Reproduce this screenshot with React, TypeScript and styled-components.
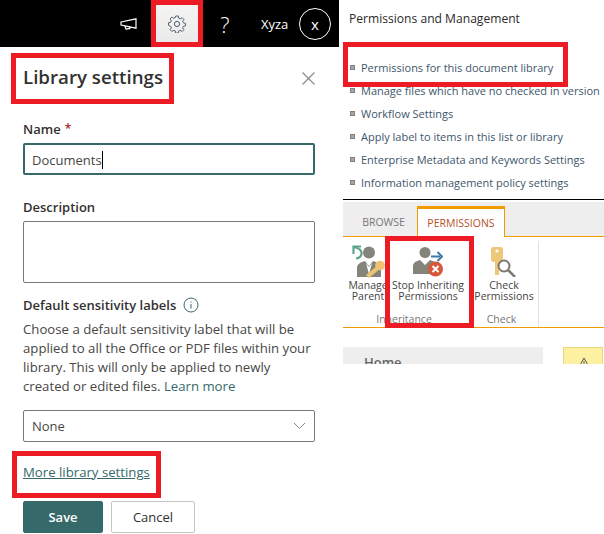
import React from "react";
import styled, { createGlobalStyle } from "styled-components";

const RED = "#ed1c24";
const TEAL = "#36696a";
const TEXT = "#323130";

const Global = createGlobalStyle`
  html, body { margin: 0; padding: 0; background: #fff; }
  body { font-family: "Open Sans", "Liberation Sans", sans-serif; }
  * { box-sizing: border-box; }
`;

const Page = styled.div`
  width: 604px;
  height: 534px;
  display: grid;
  grid-template-columns: 343px 261px;
  overflow: hidden;
`;

const Left = styled.div`
  display: flex;
  flex-direction: column;
`;

const TopBar = styled.div`
  height: 47px;
  width: 339px;
  background: #000;
  display: flex;
  align-items: center;
  color: #fff;
  padding-left: 120px;
`;

const BarIcon = styled.div`
  width: 31px;
  display: flex;
`;

const GearButton = styled.div`
  width: 52px;
  height: 47px;
  border: 5px solid ${RED};
  background: linear-gradient(#f5f4f3, #eaeaea);
  display: flex;
  align-items: center;
  justify-content: center;
`;

const Help = styled.div`
  width: 44px;
  text-align: center;
  font-size: 22px;
  font-weight: 300;
`;

const UserName = styled.div`
  font-size: 13px;
  margin-left: 14px;
  width: 38px;
`;

const Avatar = styled.div`
  width: 32px;
  height: 32px;
  border: 1px solid #fff;
  border-radius: 50%;
  display: flex;
  align-items: center;
  justify-content: center;
  font-size: 15px;
`;

const Panel = styled.div`
  padding: 6px 28px 0 23px;
  display: flex;
  flex-direction: column;
`;

const TitleRow = styled.div`
  display: flex;
  align-items: center;
  justify-content: space-between;
  margin-left: -12px;
`;

const Title = styled.h1`
  margin: 0;
  height: 51px;
  width: 163px;
  border: 5px solid ${RED};
  padding-left: 7px;
  font-size: 18.7px;
  line-height: 38px;
  font-weight: 600;
  color: ${TEXT};
  white-space: nowrap;
`;

const Close = styled.div`
  display: flex;
`;

const Label = styled.div<{ $top: number }>`
  margin-top: ${(p) => p.$top}px;
  font-size: 13px;
  line-height: 20px;
  font-weight: 600;
  color: ${TEXT};
  display: flex;
  align-items: center;
  gap: 7px;
`;

const Star = styled.span`
  color: #a4262c;
  margin-left: -3px;
  font-size: 12px;
`;

const NameInput = styled.div`
  margin-top: 4px;
  height: 32px;
  border: 2px solid ${TEAL};
  border-radius: 2px;
  padding: 1px 0 0 7px;
  font-size: 13px;
  line-height: 28px;
  color: #484644;
  display: flex;
  align-items: center;
`;

const Caret = styled.span`
  width: 1px;
  height: 18px;
  background: #000;
`;

const TextBox = styled.div`
  margin-top: 4px;
  height: 62px;
  border: 1px solid #7a7876;
  border-radius: 2px;
`;

const Blurb = styled.p`
  margin: 5px 0 0;
  font-size: 13.2px;
  line-height: 19px;
  color: #484644;
  white-space: nowrap;
`;

const LearnMore = styled.span`
  color: ${TEAL};
`;

const SelectBox = styled.div`
  margin-top: 14px;
  height: 32px;
  border: 1px solid #7a7876;
  border-radius: 2px;
  padding: 0 8px;
  display: flex;
  align-items: center;
  justify-content: space-between;
  font-size: 13px;
  color: #484644;
`;

const MoreBox = styled.div`
  margin: 9px 0 0 -11px;
  width: 149px;
  height: 47px;
  border: 5px solid ${RED};
  padding-left: 6px;
  font-size: 13.2px;
  line-height: 33px;
  white-space: nowrap;
  color: ${TEAL};
  text-decoration: underline;
`;

const Buttons = styled.div`
  margin-top: 3px;
  display: flex;
  gap: 8px;
`;

const Button = styled.div<{ $primary?: boolean }>`
  width: ${(p) => (p.$primary ? 80 : 84)}px;
  height: 32px;
  border-radius: 2px;
  border: 1px solid ${(p) => (p.$primary ? TEAL : "#c8c6c4")};
  background: ${(p) => (p.$primary ? TEAL : "#fff")};
  color: ${(p) => (p.$primary ? "#fff" : TEXT)};
  font-size: 13px;
  font-weight: ${(p) => (p.$primary ? 600 : 400)};
  display: flex;
  align-items: center;
  justify-content: center;
`;

const Right = styled.div`
  display: flex;
  flex-direction: column;
`;

const SectionTitle = styled.div`
  padding: 9px 0 0 6px;
  height: 42px;
  font-size: 12.1px;
  line-height: 20px;
  color: #2b2b2b;
  white-space: nowrap;
`;

const Links = styled.ul`
  list-style: none;
  margin: 0;
  padding: 14px 0 0;
  height: 158px;
  position: relative;
  border-bottom: 1px solid #000;
`;

const LinkRow = styled.li`
  height: 23px;
  display: flex;
  align-items: center;
  gap: 6px;
  padding-left: 7px;
  font-size: 11px;
  color: #40566b;
  white-space: nowrap;
`;

const Bullet = styled.span`
  width: 5px;
  height: 5px;
  flex: none;
  background: #a6a6a6;
  border: 1px solid #808080;
`;

const LinkHighlight = styled.div`
  position: absolute;
  left: 0;
  top: 0;
  width: 225px;
  height: 45px;
  border: 5px solid ${RED};
`;

const Ribbon = styled.div`
  margin-top: 2px;
`;

const TabStrip = styled.div`
  height: 35px;
  background: #eeeeee;
  display: flex;
  align-items: flex-end;
  border-bottom: 1px solid #f29b00;
`;

const Tab = styled.div<{ $active?: boolean }>`
  height: 28px;
  width: ${(p) => (p.$active ? 88 : 74)}px;
  padding-left: ${(p) => (p.$active ? 0 : 7)}px;
  display: flex;
  align-items: center;
  justify-content: center;
  font-size: 10.5px;
  color: ${(p) => (p.$active ? "#b5501f" : "#777")};
  ${(p) =>
    p.$active &&
    `
    background: #fff;
    border: 1px solid #f29b00;
    border-top-width: 3px;
    border-bottom: none;
    margin-bottom: -1px;
    height: 31px;
  `}
`;

const Groups = styled.div`
  height: 91px;
  display: flex;
  border-bottom: 1px solid #f29b00;
`;

const Group = styled.div`
  width: 195px;
  height: 87px;
  position: relative;
`;

const Tools = styled.div`
  display: flex;
`;

const Tool = styled.div<{ $w: number; $gap?: number }>`
  width: ${(p) => p.$w}px;
  margin-left: ${(p) => p.$gap ?? 0}px;
  padding-top: 8px;
  display: flex;
  flex-direction: column;
  align-items: center;
  font-size: 10.5px;
  line-height: 11px;
  color: #444;
  text-align: center;
  white-space: nowrap;
`;

const ToolIcon = styled.div`
  height: 32px;
  margin-bottom: 3px;
  display: flex;
`;

const GroupCaptions = styled.div`
  display: flex;
  font-size: 10.5px;
  line-height: 14px;
  color: #777;
  margin-top: 10px;
`;

const Caption = styled.div<{ $w: number }>`
  width: ${(p) => p.$w}px;
  text-align: center;
`;

const ToolHighlight = styled.div`
  position: absolute;
  left: 42px;
  top: -1px;
  width: 89px;
  height: 92px;
  border: 5px solid ${RED};
`;

const Divider = styled.div`
  width: 1px;
  height: 86px;
  background: #e1e1e1;
  margin-top: 4px;
`;

const Nav = styled.div`
  display: flex;
  gap: 20px;
  margin-top: 19px;
  height: 17px;
  overflow: hidden;
`;

const Home = styled.div`
  width: 200px;
  height: 40px;
  background: #eeeeee;
  padding: 6px 0 0 21px;
  font-size: 13px;
  font-weight: 600;
  color: #666;
`;

const Notice = styled.div`
  width: 40px;
  height: 40px;
  background: #fdf0a0;
  border: 1px solid #e6d77a;
  padding-left: 14px;
  padding-top: 3px;
`;

const Megaphone = () => (
  <svg width="18" height="12" viewBox="0 0 18 12" fill="none" stroke="#fff" strokeWidth="1.2">
    <path d="M1 4l15-3.2v9.400L1 7z" />
    <path d="M5 8l1 3 4-.6-.6-2" />
  </svg>
);

const Gear = () => (
  <svg width="18" height="18" viewBox="0 0 18 18" fill="none" stroke="#55606e" strokeWidth="1">
    <circle cx="9" cy="9" r="2.600" />
    <path d="M7.700 1h2.600l.4 2.200 1.500.7 1.900-1.200 1.800 1.800-1.200 1.900.7 1.500 2.100.4v2.600l-2.100.4-.7 1.500 1.200 1.900-1.800 1.800-1.900-1.200-1.500.7-.4 2.100H7.700l-.4-2.100-1.500-.7-1.900 1.200-1.800-1.800 1.200-1.900-.7-1.500L.5 10.300V7.700l2.100-.4.7-1.500-1.200-1.900 1.800-1.800 1.900 1.200 1.500-.7z" />
  </svg>
);

const CloseIcon = () => (
  <svg width="13" height="13" viewBox="0 0 13 13" stroke="#8a8886" strokeWidth="1.100">
    <path d="M.5.5l12 12M12.500.5l-12 12" />
  </svg>
);

const InfoIcon = () => (
  <svg width="16" height="16" viewBox="0 0 16 16" fill="none" stroke={TEAL} strokeWidth="1">
    <circle cx="8" cy="8" r="7" />
    <path d="M8 7v4.500M8 4.500v1.200" />
  </svg>
);

const Chevron = () => (
  <svg width="13" height="8" viewBox="0 0 13 8" fill="none" stroke="#8a8886" strokeWidth="1">
    <path d="M1 1l5.500 5.500L12 1" />
  </svg>
);

const ManageParentIcon = () => (
  <svg width="33" height="33" viewBox="0 0 33 33">
    <path d="M9 1.500H1.500V9" fill="none" stroke="#5da58a" strokeWidth="2.200" />
    <path d="M2 2c6 1.500 8 4 7.500 7-.4 2.500-2.500 4-5.500 4.500" fill="none" stroke="#5da58a" strokeWidth="2.200" />
    <circle cx="17" cy="7.500" r="6" fill="#85847b" />
    <path d="M5 32v-9c0-4 4-6 8-7l4 5 4-5c4 1 8 3 8 7v9z" fill="#85847b" />
    <path d="M14 18l3 4 3-4-3 11z" fill="#fff" />
    <circle cx="28" cy="20.500" r="4.800" fill="#eec373" />
    <path d="M25 21L14 30l3 3 12-10z" fill="#eec373" />
  </svg>
);

const StopIcon = () => (
  <svg width="30" height="32" viewBox="0 0 30 32">
    <g transform="translate(0 2)">
      <circle cx="12" cy="5.500" r="5.500" fill="#85847b" />
      <path d="M0 27v-8c0-3 3-5 7-6l5 5 5-5c4 1 7 3 7 6v8z" fill="#85847b" />
      <path d="M18 9.500h9" stroke="#3d78a8" strokeWidth="2" />
      <path d="M24.500 5l4.500 4.500-4.500 4.500" fill="none" stroke="#3d78a8" strokeWidth="2" />
      <circle cx="22.500" cy="22" r="7.500" fill="#d6573a" />
      <path d="M19.500 19l6 6M25.500 19l-6 6" stroke="#fff" strokeWidth="2" />
    </g>
  </svg>
);

const CheckIcon = () => (
  <svg width="26" height="32" viewBox="0 0 26 32">
    <g transform="translate(0 2)">
      <path d="M0 2a2 2 0 012-2h8a2 2 0 012 2v10a3 3 0 01-3 3H8v13H4V15H3a3 3 0 01-3-3z" fill="#eec878" />
      <circle cx="6" cy="4" r="1.500" fill="#fff" />
      <circle cx="13" cy="19" r="5.500" fill="#fff" stroke="#7a7a70" strokeWidth="2" />
      <path d="M17 23l7 7" stroke="#7a7a70" strokeWidth="2.500" />
    </g>
  </svg>
);

const WarnIcon = () => (
  <svg width="12" height="11" viewBox="0 0 12 11" fill="none" stroke="#555">
    <path d="M6 1l5 9H1z" />
    <path d="M6 4v3" />
  </svg>
);

const links = [
  "Permissions for this document library",
  "Manage files which have no checked in version",
  "Workflow Settings",
  "Apply label to items in this list or library",
  "Enterprise Metadata and Keywords Settings",
  "Information management policy settings",
];

const App: React.FC = () => {
  return (
    <Page>
      <Global />
      <Left>
        <TopBar>
          <BarIcon>
            <Megaphone />
          </BarIcon>
          <GearButton>
            <Gear />
          </GearButton>
          <Help>?</Help>
          <UserName>Xyza</UserName>
          <Avatar>x</Avatar>
        </TopBar>
        <Panel>
          <TitleRow>
            <Title>Library settings</Title>
            <Close>
              <CloseIcon />
            </Close>
          </TitleRow>
          <Label $top={15}>
            <span>Name</span>
            <Star>*</Star>
          </Label>
          <NameInput>
            Documents
            <Caret />
          </NameInput>
          <Label $top={22}>Description</Label>
          <TextBox />
          <Label $top={12}>
            Default sensitivity labels
            <InfoIcon />
          </Label>
          <Blurb>
            Choose a default sensitivity label that will be
            <br />
            applied to all the Office or PDF files within your
            <br />
            library. This will only be applied to newly
            <br />
            created or edited files. <LearnMore>Learn more</LearnMore>
          </Blurb>
          <SelectBox>
            None
            <Chevron />
          </SelectBox>
          <MoreBox>More library settings</MoreBox>
          <Buttons>
            <Button $primary>Save</Button>
            <Button>Cancel</Button>
          </Buttons>
        </Panel>
      </Left>
      <Right>
        <SectionTitle>Permissions and Management</SectionTitle>
        <Links>
          {links.map((l) => (
            <LinkRow key={l}>
              <Bullet />
              {l}
            </LinkRow>
          ))}
          <LinkHighlight />
        </Links>
        <Ribbon>
          <TabStrip>
            <Tab>BROWSE</Tab>
            <Tab $active>PERMISSIONS</Tab>
          </TabStrip>
          <Groups>
            <Group>
              <Tools>
                <Tool $w={50}>
                  <ToolIcon>
                    <ManageParentIcon />
                  </ToolIcon>
                  Manage
                  <br />
                  Parent
                </Tool>
                <Tool $w={70}>
                  <ToolIcon>
                    <StopIcon />
                  </ToolIcon>
                  Stop Inheriting
                  <br />
                  Permissions
                </Tool>
                <Tool $w={60} $gap={11}>
                  <ToolIcon>
                    <CheckIcon />
                  </ToolIcon>
                  Check
                  <br />
                  Permissions
                </Tool>
              </Tools>
              <GroupCaptions>
                <Caption $w={122}>Inheritance</Caption>
                <Caption $w={73}>Check</Caption>
              </GroupCaptions>
              <ToolHighlight />
            </Group>
            <Divider />
          </Groups>
        </Ribbon>
        <Nav>
          <Home>Home</Home>
          <Notice>
            <WarnIcon />
          </Notice>
        </Nav>
      </Right>
    </Page>
  );
};

export default App;
